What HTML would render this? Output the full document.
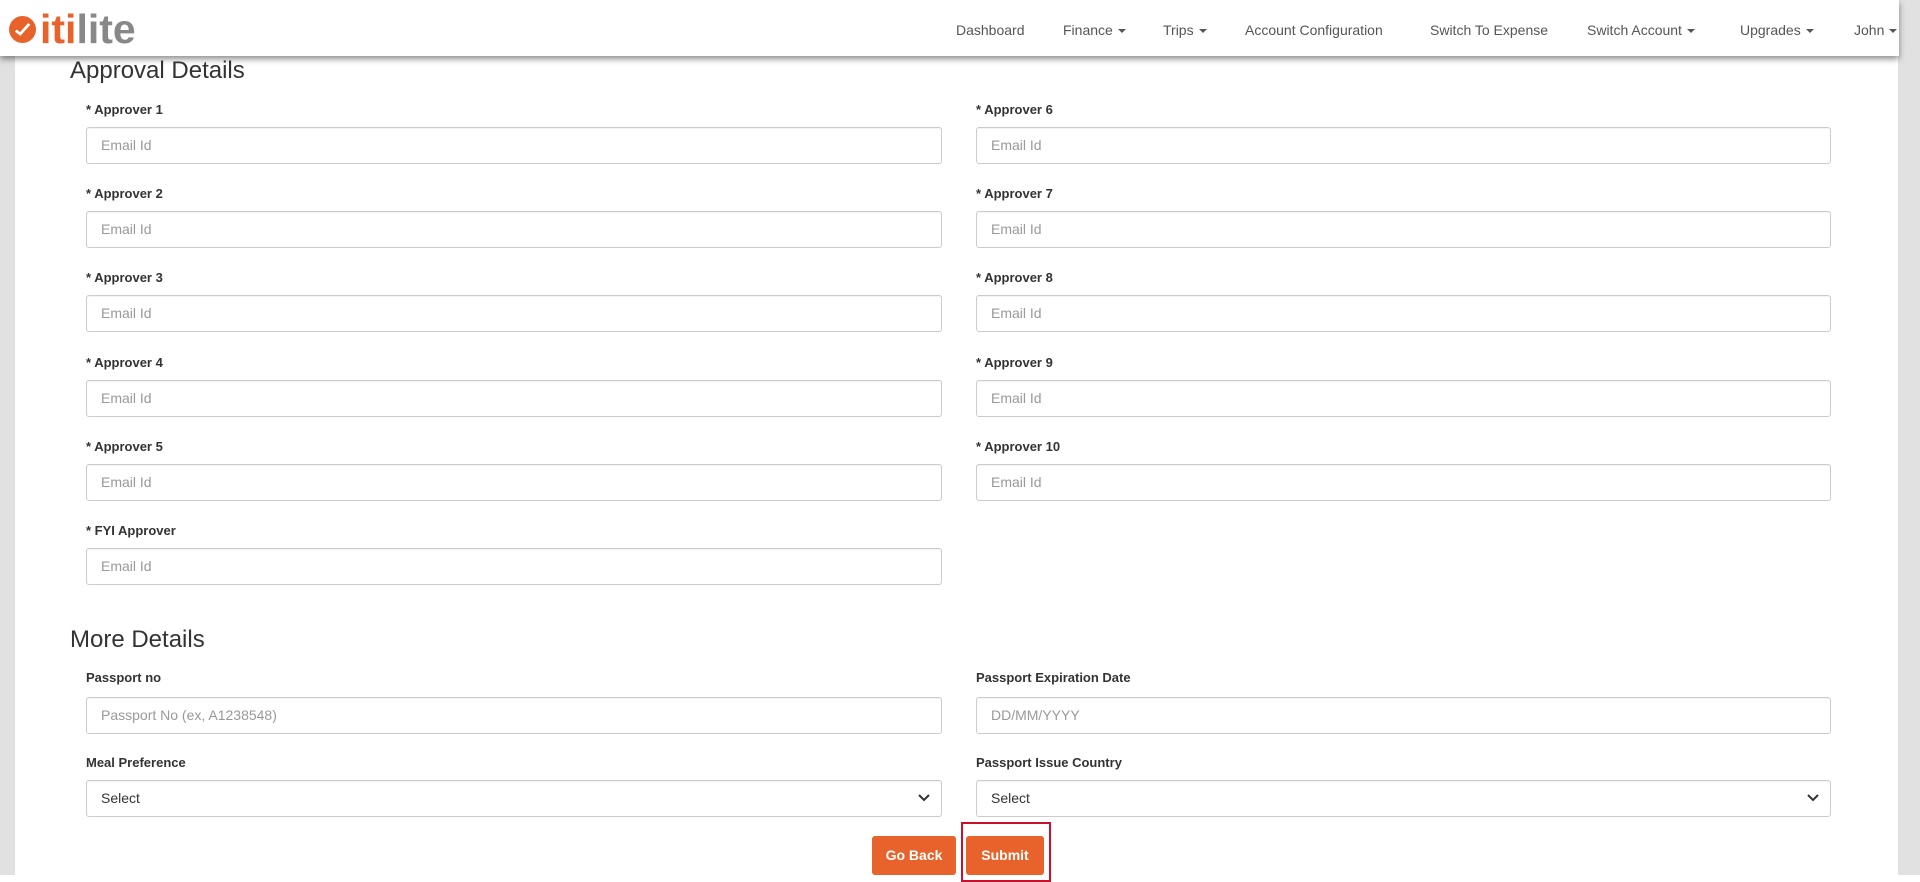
<!DOCTYPE html>
<html><head><meta charset="utf-8"><style>
*{box-sizing:border-box;margin:0;padding:0}
body{width:1920px;height:875px;overflow:hidden;background:#fff;font-family:"Liberation Sans",sans-serif;position:relative;color:#333}
.lbar{position:absolute;left:0;top:0;width:15px;height:875px;background:#e1e1e1}
.rbar{position:absolute;left:1898px;top:0;width:22px;height:875px;background:#e1e1e1}
.hdr{position:absolute;left:0;top:0;width:1899px;height:56px;background:#fff;box-shadow:0 3px 6px rgba(0,0,0,.45);z-index:2}
.logo{position:absolute;left:9px;top:6px;display:flex;align-items:center}
.logo .ic{width:27px;height:27px;border-radius:50%;background:#e8632b;position:relative;margin-right:4px}
.logo .t{font-size:41px;font-weight:bold;letter-spacing:0;line-height:46px}
.nav{position:absolute;top:22px;font-size:14px;color:#555;white-space:nowrap}
.car{display:inline-block;width:0;height:0;border-left:4px solid transparent;border-right:4px solid transparent;border-top:4px solid #555;margin-left:5px;vertical-align:middle}
h2{position:absolute;font-weight:normal;font-size:24px;color:#333}
.lb{position:absolute;font-size:13px;font-weight:bold;color:#333}
.in{position:absolute;height:37px;border:1px solid #ccc;border-radius:3px;font-size:14px;color:#999;padding:0 14px;line-height:35px;box-shadow:inset 0 1px 1px rgba(0,0,0,.05)}
.in.sel{color:#333}
.chev{position:absolute;right:10px;top:9px}
.btn{position:absolute;top:836px;height:39px;background:#e8632b;color:#fff;font-weight:bold;font-size:14px;text-align:center;line-height:39px;border-radius:3px}
</style></head><body>
<div class="lbar"></div><div class="rbar"></div>
<div class="hdr">
<div class="logo"><div class="ic"><svg width="27" height="27" viewBox="0 0 24 24"><path d="M6 13 L10 16 L18 7" stroke="#fff" stroke-width="2.5" fill="none"/></svg></div><span class="t"><span style="color:#e8632b">iti</span><span style="color:#888">lite</span></span></div>
<span class="nav" style="left:956px">Dashboard</span>
<span class="nav" style="left:1063px">Finance<span class="car"></span></span>
<span class="nav" style="left:1163px">Trips<span class="car"></span></span>
<span class="nav" style="left:1245px">Account Configuration</span>
<span class="nav" style="left:1430px">Switch To Expense</span>
<span class="nav" style="left:1587px">Switch Account<span class="car"></span></span>
<span class="nav" style="left:1740px">Upgrades<span class="car"></span></span>
<span class="nav" style="left:1854px">John<span class="car"></span></span>
</div>
<h2 style="left:70px;top:57px">Approval Details</h2>

<div class="lb" style="left:86px;top:102px">* Approver 1</div><div class="in" style="left:86px;top:127px;width:856px">Email Id</div>
<div class="lb" style="left:976px;top:102px">* Approver 6</div><div class="in" style="left:976px;top:127px;width:855px">Email Id</div>
<div class="lb" style="left:86px;top:186px">* Approver 2</div><div class="in" style="left:86px;top:211px;width:856px">Email Id</div>
<div class="lb" style="left:976px;top:186px">* Approver 7</div><div class="in" style="left:976px;top:211px;width:855px">Email Id</div>
<div class="lb" style="left:86px;top:270px">* Approver 3</div><div class="in" style="left:86px;top:295px;width:856px">Email Id</div>
<div class="lb" style="left:976px;top:270px">* Approver 8</div><div class="in" style="left:976px;top:295px;width:855px">Email Id</div>
<div class="lb" style="left:86px;top:355px">* Approver 4</div><div class="in" style="left:86px;top:380px;width:856px">Email Id</div>
<div class="lb" style="left:976px;top:355px">* Approver 9</div><div class="in" style="left:976px;top:380px;width:855px">Email Id</div>
<div class="lb" style="left:86px;top:439px">* Approver 5</div><div class="in" style="left:86px;top:464px;width:856px">Email Id</div>
<div class="lb" style="left:976px;top:439px">* Approver 10</div><div class="in" style="left:976px;top:464px;width:855px">Email Id</div>
<div class="lb" style="left:86px;top:523px">* FYI Approver</div><div class="in" style="left:86px;top:548px;width:856px">Email Id</div>

<h2 style="left:70px;top:626px">More Details</h2>
<div class="lb" style="left:86px;top:670px">Passport no</div><div class="in" style="left:86px;top:697px;width:856px">Passport No (ex, A1238548)</div>
<div class="lb" style="left:976px;top:670px">Passport Expiration Date</div><div class="in" style="left:976px;top:697px;width:855px">DD/MM/YYYY</div>
<div class="lb" style="left:86px;top:755px">Meal Preference</div><div class="in sel" style="left:86px;top:780px;width:856px">Select<svg class="chev" width="14" height="16" viewBox="0 0 14 16"><path d="M2 5 L7 10 L12 5" stroke="#333" stroke-width="2" fill="none"/></svg></div>
<div class="lb" style="left:976px;top:755px">Passport Issue Country</div><div class="in sel" style="left:976px;top:780px;width:855px">Select<svg class="chev" width="14" height="16" viewBox="0 0 14 16"><path d="M2 5 L7 10 L12 5" stroke="#333" stroke-width="2" fill="none"/></svg></div>

<div class="btn" style="left:872px;width:84px">Go Back</div>
<div style="position:absolute;left:961px;top:822px;width:90px;height:60px;border:2px solid #c8102e"></div>
<div class="btn" style="left:966px;width:78px">Submit</div>
</body></html>
